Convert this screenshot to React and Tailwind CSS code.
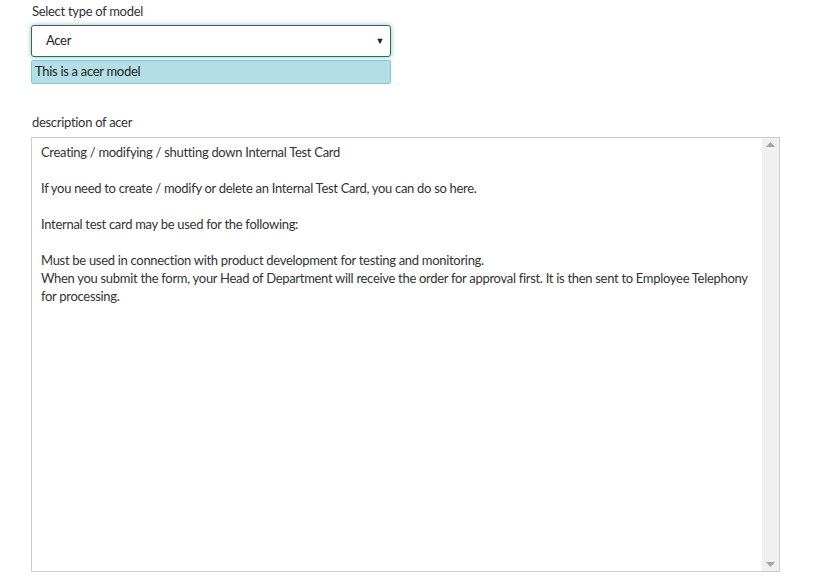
import React from "react";

const FONT = { fontFamily: "Lato, 'Liberation Sans', sans-serif" };

const LINES = [
  "Creating / modifying / shutting down Internal Test Card",
  "",
  "If you need to create / modify or delete an Internal Test Card, you can do so here.",
  "",
  "Internal test card may be used for the following:",
  "",
  "Must be used in connection with product development for testing and monitoring.",
  "When you submit the form, your Head of Department will receive the order for approval first. It is then sent to Employee Telephony",
  "for processing.",
];

export default function App() {
  return (
    <div className="w-[818px] h-[586px] bg-white text-[13px] tracking-[-0.3px] text-[#333]" style={FONT}>
      <div className="pl-[32px] pt-[2px] leading-[18px]">Select type of model</div>

      <div className="ml-[31px] mt-[5px] w-[360px] h-[32px] flex items-center justify-between rounded-[3px] border border-[#2e6b5e] bg-white pl-[14px] pr-[6px] shadow-[0_0_5px_rgba(38,140,120,0.55)]">
        <span className="text-[#222]">Acer</span>
        <span className="text-[9px] text-[#222]">▼</span>
      </div>

      <div className="ml-[31px] mt-[3px] w-[360px] h-[24px] flex items-center rounded-[2px] border border-[#86c6d2] bg-[#b3dee6] pl-[3px] text-[#222]">
        This is a acer model
      </div>

      <div className="pl-[32px] mt-[29px] leading-[18px]">description of acer</div>

      <div className="ml-[31px] mt-[6px] w-[749px] h-[435px] flex border border-[#cccccc] bg-white">
        <div className="flex-1 min-w-0 overflow-hidden pl-[9px] pt-[5px] leading-[18px] text-[#333]">
          {LINES.map((l, i) => (
            <div key={i} className="h-[18px] whitespace-nowrap">{l}</div>
          ))}
        </div>
        <div className="w-[17px] shrink-0 bg-[#f0f0f0] flex flex-col justify-between items-center py-[4px]">
          <svg width="9" height="5" viewBox="0 0 9 5"><path d="M0 5 L4.5 0 L9 5 Z" fill="#a3a3a3" /></svg>
          <svg width="9" height="5" viewBox="0 0 9 5"><path d="M0 0 L4.5 5 L9 0 Z" fill="#a3a3a3" /></svg>
        </div>
      </div>
    </div>
  );
}
